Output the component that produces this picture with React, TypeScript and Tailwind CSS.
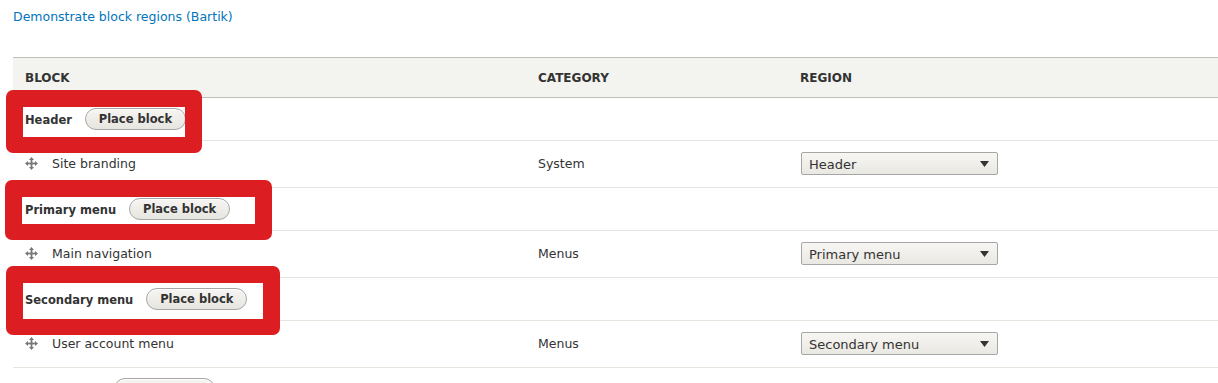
import React from "react";

type Row =
  | { kind: "region"; label: string }
  | { kind: "block"; name: string; category: string; region: string };

const rows: Row[] = [
  { kind: "region", label: "Header" },
  { kind: "block", name: "Site branding", category: "System", region: "Header" },
  { kind: "region", label: "Primary menu" },
  { kind: "block", name: "Main navigation", category: "Menus", region: "Primary menu" },
  { kind: "region", label: "Secondary menu" },
  { kind: "block", name: "User account menu", category: "Menus", region: "Secondary menu" },
  { kind: "region", label: "Highlighted" },
];

// red annotation frames drawn over the screenshot
const frames = [
  { left: 6, top: 90, width: 196, height: 63 },
  { left: 5, top: 180, width: 267, height: 60 },
  { left: 6, top: 266, width: 274, height: 69 },
];

function DragHandle() {
  return (
    <svg width="13" height="13" viewBox="0 0 13 13" className="shrink-0">
      <g fill="#787878">
        <rect x="5.6" y="2" width="1.8" height="9" />
        <rect x="2" y="5.6" width="9" height="1.8" />
        <polygon points="6.5,0 9,3 4,3" />
        <polygon points="6.5,13 9,10 4,10" />
        <polygon points="0,6.5 3,4 3,9" />
        <polygon points="13,6.5 10,4 10,9" />
      </g>
    </svg>
  );
}

function PlaceBlockButton() {
  return (
    <button className="h-[22px] w-[101px] rounded-full border border-[#a6a6a6] bg-gradient-to-b from-[#f6f5f2] to-[#e6e5df] pt-[1px] text-[11.5px] font-bold text-[#333] leading-none shadow-[inset_0_1px_0_#fff]">
      Place block
    </button>
  );
}

function RegionSelect({ value }: { readonly value: string }) {
  return (
    <div className="flex h-[23px] w-[197px] items-center justify-between rounded-[2px] border border-[#a6a6a6] bg-gradient-to-b from-[#f7f6f3] to-[#e9e8e2] pl-[7px] pr-[8px] text-[13px] text-[#333]">
      <span className="pt-[1px]">{value}</span>
      <svg width="9" height="6" viewBox="0 0 9 6">
        <polygon points="0,0 9,0 4.5,6" fill="#333" />
      </svg>
    </div>
  );
}

export default function App() {
  return (
    <div
      className="relative h-[383px] w-[1218px] overflow-hidden bg-white text-[#333]"
      style={{ fontFamily: '"DejaVu Sans", "Noto Sans", sans-serif' }}
    >
      <div className="pl-[13px] pt-[8px] text-[12.5px] text-[#0074bd]">
        <a href="#">Demonstrate block regions (Bartik)</a>
      </div>

      <div className="ml-[13px] mt-[30px]">
        <div className="grid h-[41px] grid-cols-[513px_262px_1fr] items-center border-y border-[#bfbfba] bg-[#f3f3ef] pt-[1px] text-[12px] font-bold uppercase text-[#333]">
          <div className="pl-[12px]">Block</div>
          <div className="pl-[12px]">Category</div>
          <div className="pl-[12px]">Region</div>
        </div>

        {rows.map((row, i) =>
          row.kind === "region" ? (
            <div
              key={i}
              className="flex h-[43px] items-center gap-[13px] border-b border-[#e6e4df] pl-[12px]"
            >
              <span className="mt-[4px] text-[11.5px] font-bold">{row.label}</span>
              <PlaceBlockButton />
            </div>
          ) : (
            <div
              key={i}
              className="grid h-[47px] grid-cols-[513px_262px_1fr] items-center border-b border-[#e6e4df] text-[12.5px]"
            >
              <div className="flex items-center gap-[14px] pl-[12px]">
                <DragHandle />
                <span className="mt-[2px]">{row.name}</span>
              </div>
              <div className="mt-[2px] pl-[12px]">{row.category}</div>
              <div className="pl-[13px]">
                <RegionSelect value={row.region} />
              </div>
            </div>
          ),
        )}
      </div>

      {frames.map((f, i) => (
        <div
          key={i}
          className="pointer-events-none absolute rounded-[7px] border-[17px] border-b-[16px] border-[#dc1e22]"
          style={{ left: f.left, top: f.top, width: f.width, height: f.height }}
        />
      ))}
    </div>
  );
}
